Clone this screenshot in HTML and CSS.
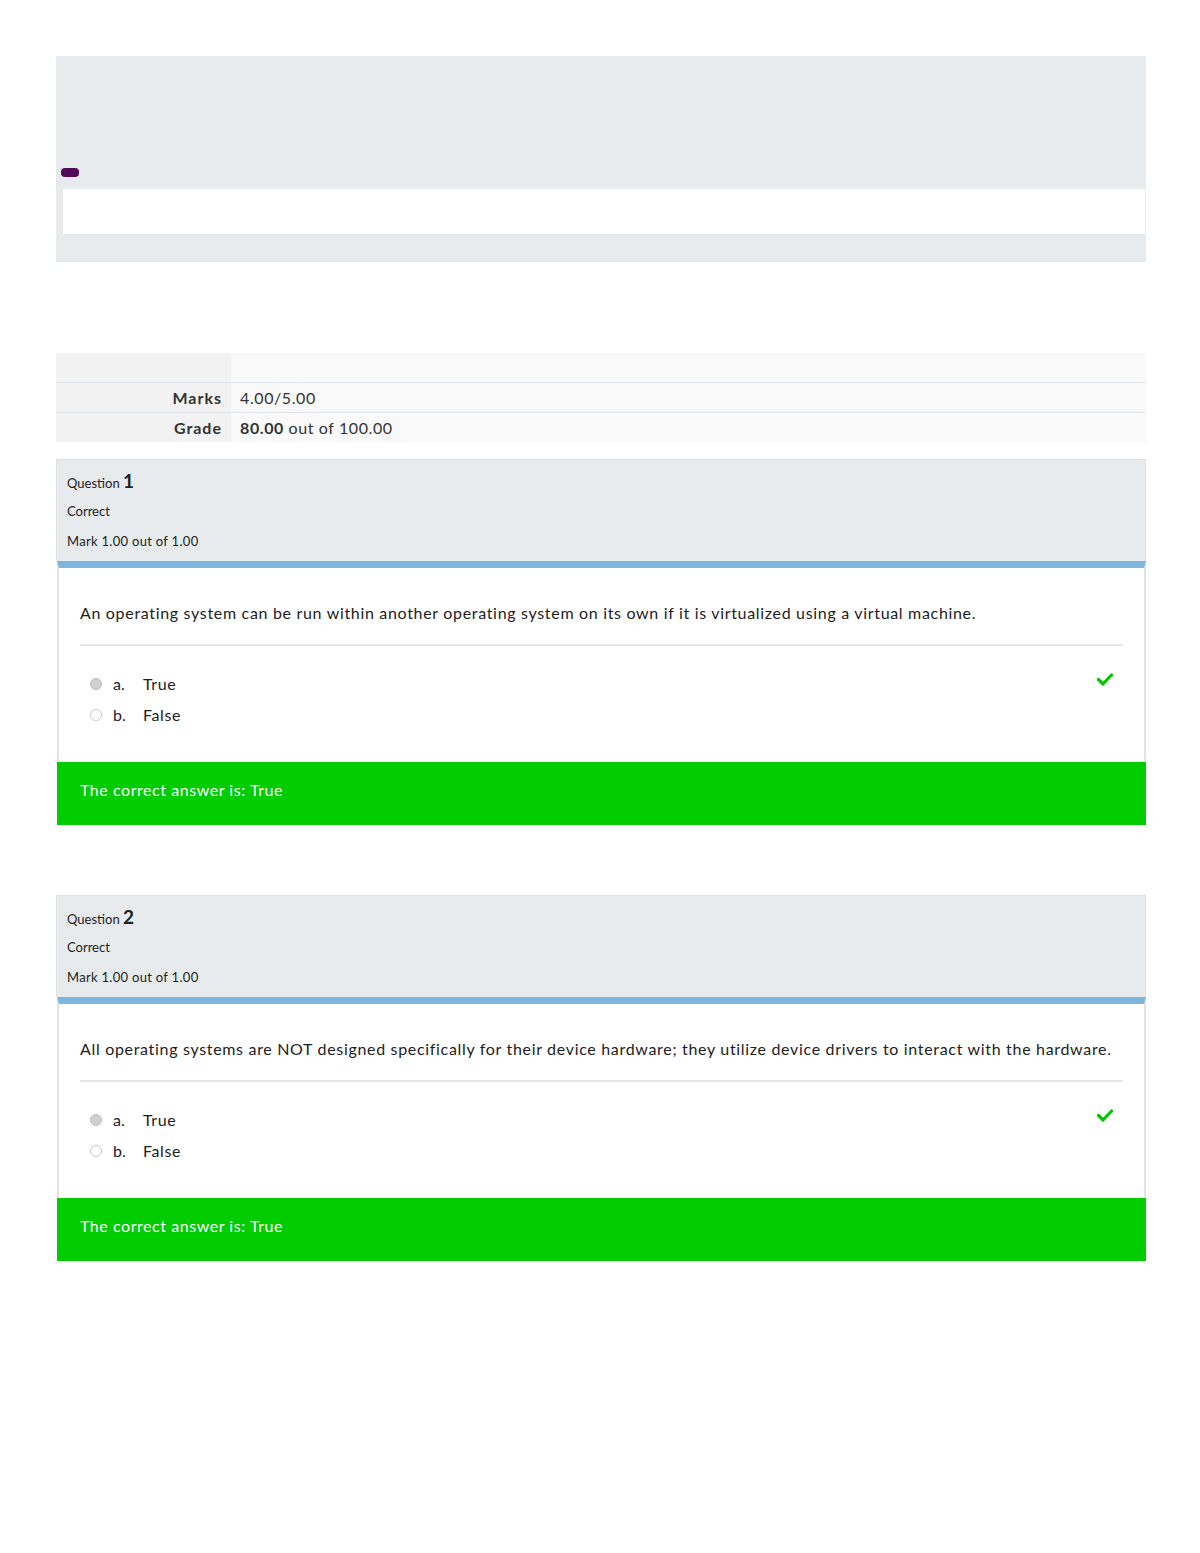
FILE: index.html
```html
<!DOCTYPE html>
<html>
	<head>
		<title>Quiz review</title>
		<meta http-equiv="Content-Type" content="text/html; charset=utf-8" />
		<link rel="stylesheet" href="styles.css">
	</head>
	<body>
		<div class="pageHeader">
			<div class="pill"></div>
			<div class="headerStrip"></div>
		</div>

		<table class="summary">
			<tr class="first">
				<th></th>
				<td></td>
			</tr>
			<tr>
				<th>Marks</th>
				<td>4.00/5.00</td>
			</tr>
			<tr>
				<th>Grade</th>
				<td><b>80.00</b> out of 100.00</td>
			</tr>
		</table>

		<div class="que">
			<div class="info">
				<h3 class="qno">Question <span>1</span></h3>
				<div class="state">Correct</div>
				<div class="grade">Mark 1.00 out of 1.00</div>
			</div>
			<div class="content">
				<div class="qtext">An operating system can be run within another operating system on its own if it is virtualized using a virtual machine.</div>
				<div class="answer">
					<div class="option">
						<span class="radio checked"></span>
						<span class="letter">a.</span>
						<span class="label">True</span>
						<svg class="tick" width="16" height="13" viewBox="0 0 16 13"><path d="M1.5 6.5 L6 11 L14.5 2" fill="none" stroke="#00c800" stroke-width="3.2" stroke-linecap="round" stroke-linejoin="round"/></svg>
					</div>
					<div class="option">
						<span class="radio"></span>
						<span class="letter">b.</span>
						<span class="label">False</span>
					</div>
				</div>
			</div>
			<div class="feedback">The correct answer is: True</div>
		</div>

		<div class="que">
			<div class="info">
				<h3 class="qno">Question <span>2</span></h3>
				<div class="state">Correct</div>
				<div class="grade">Mark 1.00 out of 1.00</div>
			</div>
			<div class="content">
				<div class="qtext">All operating systems are NOT designed specifically for their device hardware; they utilize device drivers to interact with the hardware.</div>
				<div class="answer">
					<div class="option">
						<span class="radio checked"></span>
						<span class="letter">a.</span>
						<span class="label">True</span>
						<svg class="tick" width="16" height="13" viewBox="0 0 16 13"><path d="M1.5 6.5 L6 11 L14.5 2" fill="none" stroke="#00c800" stroke-width="3.2" stroke-linecap="round" stroke-linejoin="round"/></svg>
					</div>
					<div class="option">
						<span class="radio"></span>
						<span class="letter">b.</span>
						<span class="label">False</span>
					</div>
				</div>
			</div>
			<div class="feedback">The correct answer is: True</div>
		</div>
	</body>
</html>
```

FILE: styles.css
```css
body {
	margin: 0;
	padding: 56px 54px 0 56px;
	background: #ffffff;
	font-family: Lato, "Liberation Sans", sans-serif;
	color: #1d2125;
}
.pageHeader {
	height: 206px;
	background: #e7ebee;
	display: flex;
	flex-direction: column;
	padding: 112px 1px 0 5px;
	box-sizing: border-box;
}
.pill {
	width: 18px;
	height: 9px;
	border-radius: 4px;
	background: #500a58;
}
.headerStrip {
	margin: 12px 0 0 2px;
	height: 45px;
	background: #ffffff;
}
.summary {
	margin-top: 91px;
	width: 100%;
	border-collapse: collapse;
	font-size: 16px;
	color: #333;
	letter-spacing: 0.6px;
}
.summary th {
	width: 175px;
	box-sizing: border-box;
	background: #f2f2f2;
	text-align: right;
	padding: 0 9px 0 0;
	height: 29px;
	font-weight: bold;
	letter-spacing: 1px;
}
.summary td {
	background: #f9f9f9;
	padding: 0 0 0 9px;
	height: 29px;
}
.summary tr + tr th,
.summary tr + tr td {
	border-top: 1px solid #dfe4ea;
}
.que {
	margin-top: 17px;
	margin-bottom: 70px;
}
.info {
	background: #e7ebee;
	border: 1px solid #dde1e4;
	border-bottom: none;
	height: 102px;
	padding: 8px 0 0 10px;
	box-sizing: border-box;
	font-size: 13px;
	color: #222;
}
.qno {
	margin: 0;
	font-size: 13px;
	font-weight: normal;
	height: 28px;
	line-height: 26px;
}
.qno span {
	font-size: 19px;
	font-weight: bold;
}
.state {
	height: 30px;
	line-height: 30px;
}
.grade {
	height: 30px;
	line-height: 30px;
	letter-spacing: 0.3px;
}
.content {
	border-top: 7px solid #7fb6dd;
	border-left: 2px solid #e2e2e2;
	border-right: 2px solid #e2e2e2;
	margin: 0 0 0 1px;
	padding: 33px 21px 24px 21px;
	font-size: 16px;
	height: 201px;
	box-sizing: border-box;
}
.qtext {
	line-height: 24px;
	padding-bottom: 19px;
	border-bottom: 2px solid #e5e7e9;
	letter-spacing: 0.68px;
}
.answer {
	padding: 22px 0 0 10px;
}
.option {
	display: flex;
	align-items: center;
	height: 31px;
	position: relative;
}
.radio {
	width: 12px;
	height: 12px;
	border: 1px solid #c8c8c8;
	border-radius: 50%;
	box-sizing: border-box;
	background: #fff;
	margin-right: 11px;
}
.radio.checked {
	background: #d0d0d0;
	border-color: #bdbdbd;
}
.letter {
	width: 30px;
}
.label {
	letter-spacing: 0.6px;
}
.tick {
	position: absolute;
	right: 10px;
	top: 5px;
}
.feedback {
	background: #00cc00;
	color: #ffffff;
	height: 63px;
	line-height: 56px;
	padding-left: 23px;
	font-size: 16px;
	margin-left: 1px;
	letter-spacing: 0.55px;
}
```
